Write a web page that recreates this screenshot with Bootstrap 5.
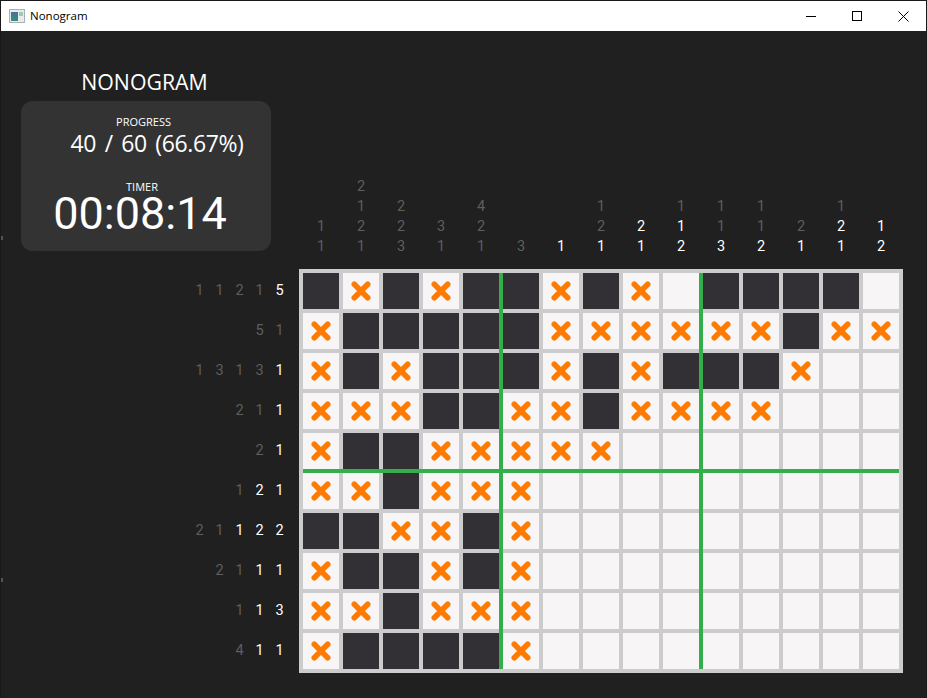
<!DOCTYPE html>
<html>
<head>
    <meta charset="UTF-8">
    <title>Nonogram</title>
    <link href="https://cdn.jsdelivr.net/npm/bootstrap@5.3.5/dist/css/bootstrap.min.css" rel="stylesheet">
    <style>
        html, body {
            height: 100%;
            overflow: hidden;
            background-color: #202020;
        }
        #app {
            height: 698px;
            border: 1px solid #1a1a1a;
            border-bottom: 0;
            background-color: #202020;
        }
        #titlebar {
            height: 30px;
            background-color: #fff;
            font-family: "Open Sans", "Liberation Sans", sans-serif;
            font-size: 11.5px;
            color: #000;
        }
        #window-name {
            margin-left: 5px;
        }
        .win-btn {
            width: 46px;
            height: 30px;
        }
        .edge-mark {
            position: absolute;
            left: 0;
            width: 2px;
            height: 4px;
            background-color: #5a5340;
        }
        #main {
            display: grid;
            grid-template-columns: 298px 604px;
            grid-template-rows: 238px 404px;
        }
        #side {
            padding: 36px 0 0 20px;
            color: #fff;
            font-family: "Open Sans", "Noto Sans", sans-serif;
        }
        #game-title {
            width: 247px;
            height: 34px;
            font-size: 21.3px;
            line-height: 30px;
            text-align: center;
        }
        #stats {
            width: 250px;
            height: 150px;
            background-color: #333333;
            border-radius: 12px;
        }
        .stat-label {
            font-size: 11px;
            line-height: 13px;
        }
        #progress-label {
            margin: 14px 5px 0 0;
        }
        #progress-value {
            font-size: 23px;
            line-height: 30px;
            letter-spacing: -0.4px;
            word-spacing: 3px;
            white-space: pre;
            margin-left: 22px;
        }
        #timer-label {
            margin: 22px 8px 0 0;
        }
        #timer-value {
            font-family: Roboto, "Open Sans", sans-serif;
            font-size: 45px;
            line-height: 41px;
            margin-right: 12px;
        }
        #col-clues {
            padding: 0 4px 12px;
            column-gap: 4px;
        }
        .col-clue {
            width: 36px;
        }
        .clue-num {
            font-family: Roboto, "Liberation Sans", sans-serif;
            font-size: 14.5px;
            height: 20px;
            line-height: 20px;
            width: 20px;
            text-align: center;
            color: #5e5e5e;
        }
        .clue-num.on {
            color: #ffffff;
        }
        #row-clues {
            padding: 4px 9.5px 4px 0;
            row-gap: 4px;
        }
        .row-clue {
            height: 36px;
        }
        #board {
            width: 604px;
            height: 404px;
            padding: 4px;
            background-color: #cccccc;
            display: grid;
            grid-template-columns: repeat(15, 36px);
            grid-auto-rows: 36px;
            gap: 4px;
        }
        .cell-open {
            background-color: #f7f5f6;
        }
        .cell-fill {
            background-color: #323034;
        }
        .divider {
            position: absolute;
            background-color: #33ae4b;
        }
        .divider-v {
            top: 4px;
            bottom: 4px;
            width: 4px;
        }
        .divider-h {
            left: 4px;
            right: 4px;
            height: 4px;
            top: 200px;
        }
    </style>
</head>
<body>
<div id="app" class="position-relative">
    <div id="titlebar" class="d-flex align-items-center justify-content-between">
        <div class="d-flex align-items-center">
            <svg class="ms-2" width="16" height="16" viewBox="0 0 16 16">
                <defs>
                    <linearGradient id="iconPane" x1="0" y1="0" x2="0" y2="1">
                        <stop offset="0" stop-color="#4a6f9e"/>
                        <stop offset="1" stop-color="#35907a"/>
                    </linearGradient>
                </defs>
                <rect x="0.5" y="1.5" width="15" height="13" fill="#e8ecec" stroke="#a9b0b3"/>
                <rect x="2" y="4" width="7" height="9" fill="url(#iconPane)"/>
                <rect x="10" y="4" width="4" height="4" fill="#9fc9b8"/>
            </svg>
            <span id="window-name">Nonogram</span>
        </div>
        <div class="d-flex">
            <div class="win-btn d-flex align-items-center justify-content-center">
                <svg width="10" height="10" viewBox="0 0 10 10"><path d="M0 5.5H10" stroke="#000" fill="none"/></svg>
            </div>
            <div class="win-btn d-flex align-items-center justify-content-center">
                <svg width="10" height="10" viewBox="0 0 10 10"><rect x="0.5" y="0.5" width="9" height="9" stroke="#000" fill="none"/></svg>
            </div>
            <div class="win-btn d-flex align-items-center justify-content-center">
                <svg width="11" height="11" viewBox="0 0 11 11"><path d="M0.5 0.5L10.5 10.5M10.5 0.5L0.5 10.5" stroke="#000" fill="none"/></svg>
            </div>
        </div>
    </div>
    <div id="main">
        <div id="side">
            <div id="game-title">NONOGRAM</div>
            <div id="stats" class="d-flex flex-column align-items-center">
                <div id="progress-label" class="stat-label">PROGRESS</div>
                <div id="progress-value">40 / 60 (66.67%)</div>
                <div id="timer-label" class="stat-label">TIMER</div>
                <div id="timer-value">00:08:14</div>
            </div>
        </div>
        <div id="col-clues" class="d-flex align-items-end"></div>
        <div id="row-clues" class="d-flex flex-column"></div>
        <div class="position-relative">
            <div id="board"></div>
            <div class="divider divider-v" style="left: 200px"></div>
            <div class="divider divider-v" style="left: 400px"></div>
            <div class="divider divider-h"></div>
        </div>
    </div>
    <div class="edge-mark" style="top: 235px"></div>
    <div class="edge-mark" style="top: 577px"></div>
</div>

<script src="https://cdn.jsdelivr.net/npm/bootstrap@5.3.5/dist/js/bootstrap.bundle.min.js"></script>
<script>
    // F filled, X crossed, . empty
    const rows = [
        'FXFXFFXFX.FFFF.',
        'XFFFFFXXXXXXFXX',
        'XFXFFFXFXFFFX..',
        'XXXFFXXFXXXX...',
        'XFFXXXXX.......',
        'XXFXXX.........',
        'FFXXFX.........',
        'XFFXFX.........',
        'XXFXXX.........',
        'XFFFFX.........'
    ];

    // * marks a clue that is done
    const colClues = [
        ['1', '1'], ['2', '1', '2', '1'], ['2', '2', '3'], ['3', '1'], ['4', '2', '1'],
        ['3'], ['1*'], ['1', '2', '1*'], ['2*', '1*'], ['1', '1*', '2*'],
        ['1', '1', '3*'], ['1', '1', '2*'], ['2', '1*'], ['1', '2*', '1*'], ['1*', '2*']
    ];
    const rowClues = [
        ['1', '1', '2', '1', '5*'], ['5', '1'], ['1', '3', '1', '3', '1*'], ['2', '1', '1*'], ['2', '1*'],
        ['1', '2*', '1*'], ['2', '1', '1*', '2*', '2*'], ['2', '1', '1*', '1*'], ['1', '1*', '3*'], ['4', '1*', '1*']
    ];

    const crossSvg = '<svg width="36" height="36" viewBox="0 0 36 36"><path d="M11.3 11.3L24.7 24.7M24.7 11.3L11.3 24.7" stroke="#ff7a00" stroke-width="5.6" stroke-linecap="round" fill="none"/></svg>';

    function clueHtml(clue) {
        const on = clue.endsWith('*');
        return `<div class="clue-num${on ? ' on' : ''}">${clue.replace('*', '')}</div>`;
    }

    document.getElementById('board').innerHTML = rows.map(row => row.split('').map(c => {
        if (c === 'F') return '<div class="cell-fill"></div>';
        if (c === 'X') return `<div class="cell-open d-flex">${crossSvg}</div>`;
        return '<div class="cell-open"></div>';
    }).join('')).join('');

    document.getElementById('col-clues').innerHTML = colClues.map(clues =>
        `<div class="col-clue d-flex flex-column align-items-center">${clues.map(clueHtml).join('')}</div>`
    ).join('');

    document.getElementById('row-clues').innerHTML = rowClues.map(clues =>
        `<div class="row-clue d-flex align-items-center justify-content-end">${clues.map(clueHtml).join('')}</div>`
    ).join('');
</script>
</body>
</html>
